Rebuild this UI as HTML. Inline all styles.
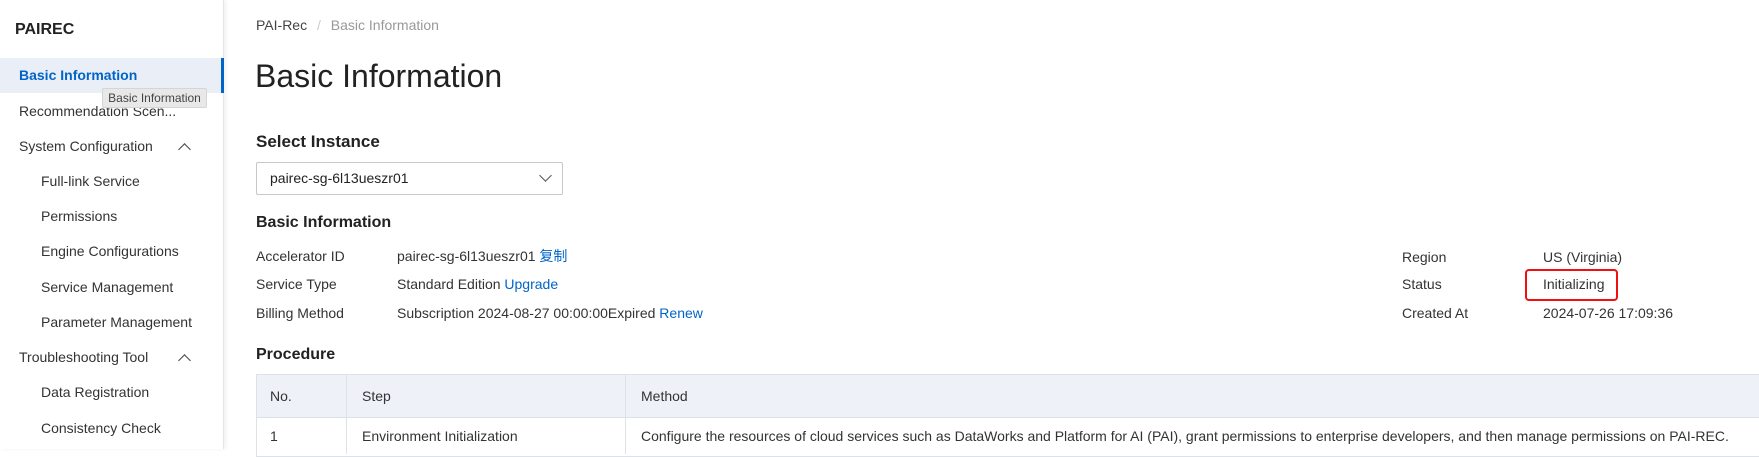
<!DOCTYPE html>
<html><head><meta charset="utf-8"><style>
*{margin:0;padding:0;box-sizing:border-box}
body{width:1759px;height:449px;overflow:hidden;background:#fff;font-family:"Liberation Sans","Noto Sans CJK SC",sans-serif;color:#333;position:relative;font-size:14px}
.a{position:absolute;white-space:nowrap;line-height:1}
.side{position:absolute;left:0;top:0;width:224px;height:449px;border-right:1px solid #e5e5e5;box-shadow:2px 0 4px rgba(0,0,0,.06)}
.mi{position:absolute;left:19px;transform:translateY(-50%);font-size:14px;color:#333;white-space:nowrap}
.sub{left:41px}
.chev{position:absolute;left:180px;width:9px;height:9px;border-left:1.5px solid #444;border-top:1.5px solid #444;transform:rotate(45deg)}
.lbl{font-size:14px;color:#333}
.blue{color:#0064c8}
</style></head><body>
<div class="side">
<div class="a" style="left:15px;top:22px;font-size:16px;font-weight:bold;color:#222">PAIREC</div>
<div style="position:absolute;left:0;top:58px;width:224px;height:35px;background:#eaeff7"></div>
<div style="position:absolute;left:221px;top:58px;width:3px;height:35px;background:#0064c8"></div>
<div class="mi" style="top:75px;color:#0064c8;font-weight:bold">Basic Information</div>
<div class="mi" style="top:111px">Recommendation Scen...</div>
<div class="mi" style="top:146px">System Configuration</div>
<div class="chev" style="top:145px"></div>
<div class="mi sub" style="top:181px">Full-link Service</div>
<div class="mi sub" style="top:216px">Permissions</div>
<div class="mi sub" style="top:251px">Engine Configurations</div>
<div class="mi sub" style="top:287px">Service Management</div>
<div class="mi sub" style="top:322px">Parameter Management</div>
<div class="mi" style="top:357px">Troubleshooting Tool</div>
<div class="chev" style="top:356px"></div>
<div class="mi sub" style="top:392px">Data Registration</div>
<div class="mi sub" style="top:428px">Consistency Check</div>
<div style="position:absolute;left:102px;top:88px;width:105px;height:20px;background:#e8e8e8;border:1px solid #d5d5d5;border-radius:2px;font-size:12px;color:#444;line-height:18px;text-align:center">Basic Information</div>
</div>

<div class="a" style="left:256px;top:18px;font-size:14px;color:#444">PAI-Rec <span style="color:#ccc;margin:0 6px">/</span> <span style="color:#999">Basic Information</span></div>
<div class="a" style="left:255px;top:60px;font-size:32px;color:#222">Basic Information</div>
<div class="a" style="left:256px;top:133px;font-size:17px;font-weight:bold;color:#222">Select Instance</div>
<div style="position:absolute;left:256px;top:162px;width:307px;height:33px;border:1px solid #c8c8c8;border-radius:2px"></div>
<div class="a" style="left:270px;top:171px;font-size:14px;color:#222">pairec-sg-6l13ueszr01</div>
<div style="position:absolute;left:541px;top:171px;width:9px;height:9px;border-right:1.5px solid #555;border-bottom:1.5px solid #555;transform:rotate(45deg)"></div>
<div class="a" style="left:256px;top:215px;font-size:16px;font-weight:bold;color:#222">Basic Information</div>

<div class="a lbl" style="left:256px;top:249px">Accelerator ID</div>
<div class="a lbl" style="left:397px;top:249px">pairec-sg-6l13ueszr01 <span class="blue">复制</span></div>
<div class="a lbl" style="left:256px;top:277px">Service Type</div>
<div class="a lbl" style="left:397px;top:277px">Standard Edition <span class="blue">Upgrade</span></div>
<div class="a lbl" style="left:256px;top:306px">Billing Method</div>
<div class="a lbl" style="left:397px;top:306px">Subscription 2024-08-27 00:00:00Expired <span class="blue">Renew</span></div>

<div class="a lbl" style="left:1402px;top:250px">Region</div>
<div class="a lbl" style="left:1543px;top:250px">US (Virginia)</div>
<div class="a lbl" style="left:1402px;top:277px">Status</div>
<div class="a lbl" style="left:1543px;top:277px">Initializing</div>
<div style="position:absolute;left:1525px;top:269px;width:93px;height:32px;border:2px solid #f01010;border-radius:4px"></div>
<div class="a lbl" style="left:1402px;top:306px">Created At</div>
<div class="a lbl" style="left:1543px;top:306px">2024-07-26 17:09:36</div>

<div class="a" style="left:256px;top:347px;font-size:16px;font-weight:bold;color:#222">Procedure</div>
<div style="position:absolute;left:256px;top:374px;width:1510px;height:44px;background:#eef1f7;border:1px solid #dde1e8"></div>
<div style="position:absolute;left:256px;top:417px;width:1510px;height:40px;border:1px solid #dde1e8;border-top:none"></div>
<div style="position:absolute;left:346px;top:374px;width:1px;height:80px;background:#dde1e8"></div>
<div style="position:absolute;left:625px;top:374px;width:1px;height:80px;background:#dde1e8"></div>
<div class="a lbl" style="left:270px;top:389px">No.</div>
<div class="a lbl" style="left:362px;top:389px">Step</div>
<div class="a lbl" style="left:641px;top:389px">Method</div>
<div class="a lbl" style="left:270px;top:429px">1</div>
<div class="a lbl" style="left:362px;top:429px">Environment Initialization</div>
<div class="a lbl" style="left:641px;top:429px">Configure the resources of cloud services such as DataWorks and Platform for AI (PAI), grant permissions to enterprise developers, and then manage permissions on PAI-REC.</div>
</body></html>
